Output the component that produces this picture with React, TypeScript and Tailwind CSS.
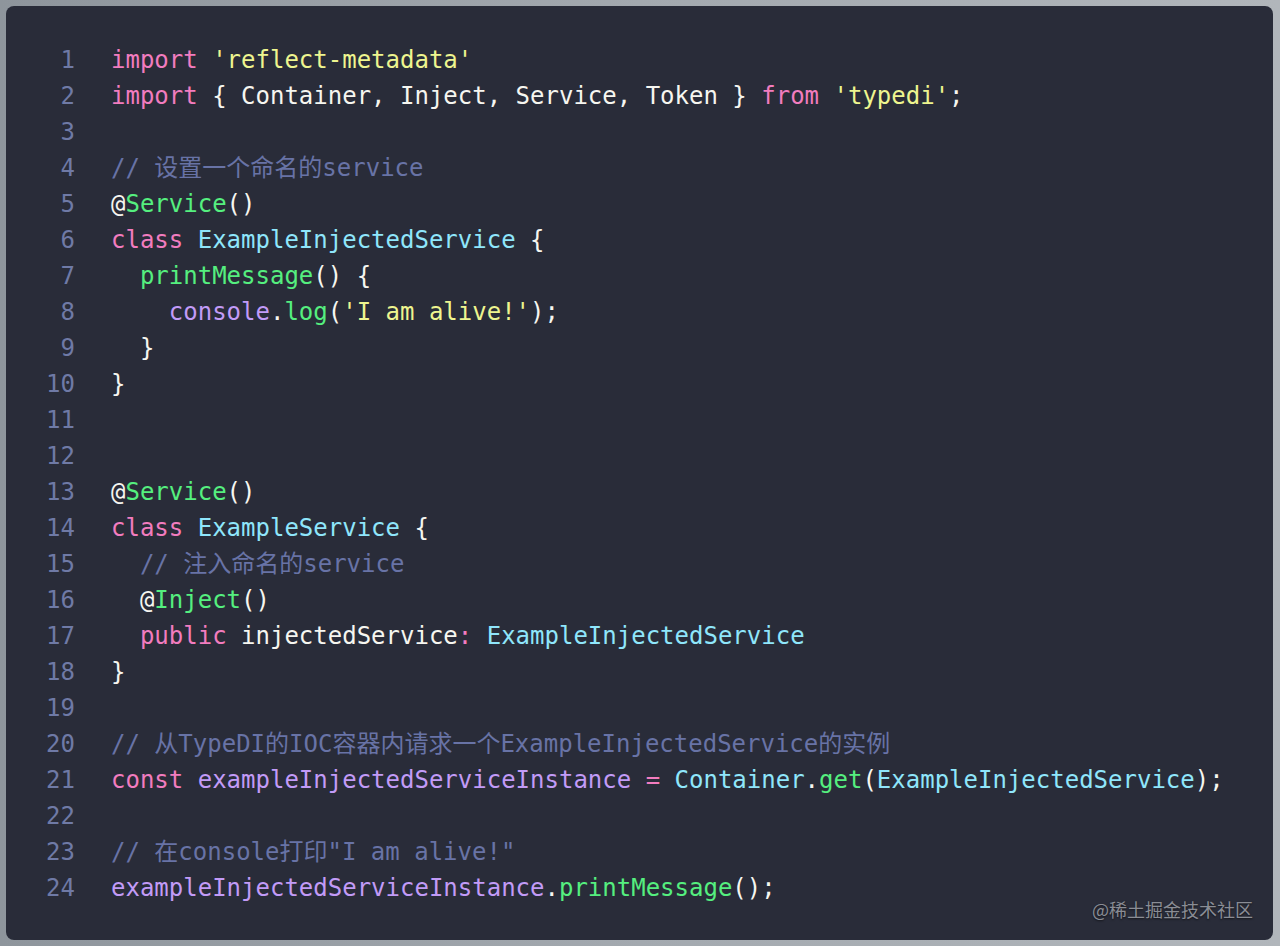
type Tok = [string, string];

const K = "text-[#f27cbf]"; // keyword pink
const S = "text-[#eef58f]"; // string yellow
const W = "text-[#f6f6f0]"; // plain
const C = "text-[#6873a6]"; // comment
const G = "text-[#55ef7f]"; // function green
const T = "text-[#8fe6fb]"; // class cyan
const P = "text-[#c29bf7]"; // variable purple

const lines: Tok[][] = [
  [[K, "import"], [W, " "], [S, "'reflect-metadata'"]],
  [[K, "import"], [W, " { Container, Inject, Service, Token } "], [K, "from"], [W, " "], [S, "'typedi'"], [W, ";"]],
  [],
  [[C, "// 设置一个命名的service"]],
  [[W, "@"], [G, "Service"], [W, "()"]],
  [[K, "class"], [W, " "], [T, "ExampleInjectedService"], [W, " {"]],
  [[W, "  "], [G, "printMessage"], [W, "() {"]],
  [[W, "    "], [P, "console"], [W, "."], [G, "log"], [W, "("], [S, "'I am alive!'"], [W, ");"]],
  [[W, "  }"]],
  [[W, "}"]],
  [],
  [],
  [[W, "@"], [G, "Service"], [W, "()"]],
  [[K, "class"], [W, " "], [T, "ExampleService"], [W, " {"]],
  [[C, "  // 注入命名的service"]],
  [[W, "  @"], [G, "Inject"], [W, "()"]],
  [[W, "  "], [K, "public"], [W, " injectedService"], [K, ":"], [W, " "], [T, "ExampleInjectedService"]],
  [[W, "}"]],
  [],
  [[C, "// 从TypeDI的IOC容器内请求一个ExampleInjectedService的实例"]],
  [[K, "const"], [W, " "], [P, "exampleInjectedServiceInstance"], [W, " "], [K, "="], [W, " "], [T, "Container"], [W, "."], [G, "get"], [W, "("], [T, "ExampleInjectedService"], [W, ");"]],
  [],
  [[C, "// 在console打印\"I am alive!\""]],
  [[P, "exampleInjectedServiceInstance"], [W, "."], [G, "printMessage"], [W, "();"]],
];

const mono = {
  fontFamily:
    '"DejaVu Sans Mono", "Noto Sans CJK SC", monospace',
};

export default function App() {
  return (
    <div className="h-[946px] w-[1280px] bg-gradient-to-r from-[#8e959c] via-[#a3a9af] to-[#b1b6bb] pt-[6px] pl-[6px] pr-[7px] pb-[6px]">
      <div className="relative h-full w-full rounded-[8px] bg-[#292c39] pt-[36px] pl-[40px]">
        <div className="flex text-[24px] leading-[36px]" style={mono}>
          <div className="w-[29px] shrink-0 text-right text-[#6f7aa6]">
            {lines.map((_, i) => (
              <div key={i}>{i + 1}</div>
            ))}
          </div>
          <div className="ml-[36px] whitespace-pre">
            {lines.map((line, i) => (
              <div key={i} className="h-[36px]">
                {line.map(([cls, text], j) => (
                  <span key={j} className={cls}>
                    {text}
                  </span>
                ))}
              </div>
            ))}
          </div>
        </div>
        <div
          className="absolute right-[20px] bottom-[19px] text-[18px] leading-[24px] text-[#8a8d95] [text-shadow:0_1px_2px_rgba(0,0,0,0.6)]"
          style={{ fontFamily: '"Noto Sans CJK SC", "Noto Sans", sans-serif' }}
        >
          @稀土掘金技术社区
        </div>
      </div>
    </div>
  );
}
